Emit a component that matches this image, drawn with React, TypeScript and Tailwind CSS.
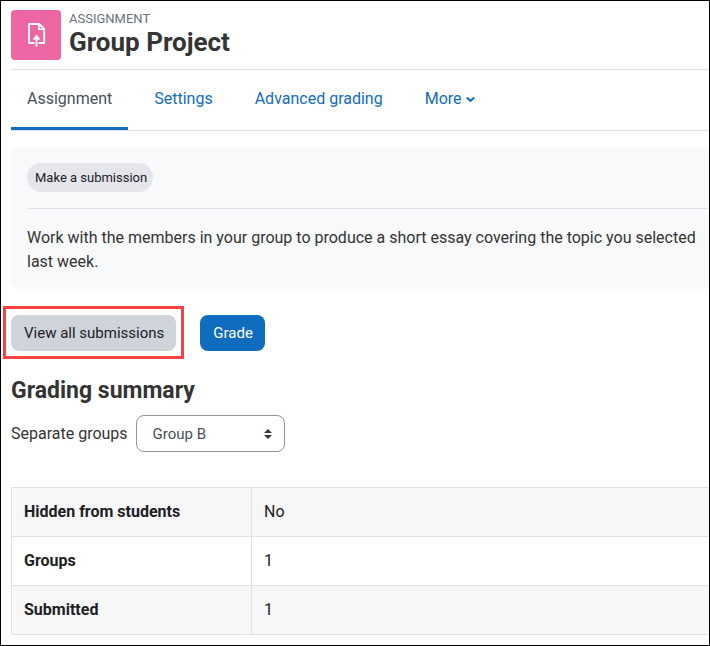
import { useState } from 'react'
import clsx from 'clsx'

const TABS = ['Assignment', 'Settings', 'Advanced grading']

const SUMMARY = [
  { label: 'Hidden from students', value: 'No' },
  { label: 'Groups', value: '1' },
  { label: 'Submitted', value: '1' },
]

function AssignmentIcon() {
  return (
    <svg width="24" height="24" viewBox="0 0 24 24" fill="none" aria-hidden="true">
      <path
        d="M10.5 20H5V1H15.2L20.2 6V20H14.5"
        stroke="#fff"
        strokeWidth="1.8"
        strokeLinejoin="round"
      />
      <path d="M14.8 1V6.3H20" stroke="#fff" strokeWidth="1.6" />
      <path d="M12.5 14V23.8" stroke="#fff" strokeWidth="1.8" />
      <path d="M12.5 11.8L16 16.2H9Z" fill="#fff" stroke="#fff" strokeWidth="0.6" />
    </svg>
  )
}

function PageHeader() {
  return (
    <header className="flex items-center gap-2 border-b border-[#dee2e6] pt-[9px] pb-[9px]">
      <div className="flex size-[50px] shrink-0 items-center justify-center rounded bg-[#eb66a2]">
        <AssignmentIcon />
      </div>
      <div className="pb-0.5">
        <div className="text-[13px] leading-4 text-[#6a737b] uppercase">Assignment</div>
        <h1 className="text-[26px] leading-[30px] font-bold text-[#343434]">Group Project</h1>
      </div>
    </header>
  )
}

function Tabs() {
  return (
    <nav className="flex gap-[10px] border-b border-[#dee2e6]">
      {TABS.map((tab, i) => (
        <a
          key={tab}
          href="#"
          aria-current={i === 0 ? 'page' : undefined}
          className={clsx(
            'flex h-[60px] items-center border-b-3 px-4 leading-6',
            i === 0 ? 'border-[#0f6cbf] text-[#495057]' : 'border-transparent text-[#0f6cbf]'
          )}
        >
          {tab}
        </a>
      ))}
      <button
        type="button"
        className="flex h-[60px] items-center gap-1 border-b-3 border-transparent px-4 leading-6 text-[#0f6cbf]"
      >
        More
        <svg width="9" height="8" viewBox="0 0 9 8" fill="none" aria-hidden="true">
          <path d="M0.8 2.4L4.5 5.8L8.2 2.4" stroke="currentColor" strokeWidth="2" />
        </svg>
      </button>
    </nav>
  )
}

function GroupSelect() {
  const [group, setGroup] = useState('Group B')

  return (
    <div className="mt-2 flex items-center gap-2">
      <label htmlFor="group" className="leading-6">
        Separate groups
      </label>
      <div className="grid items-center">
        <select
          id="group"
          value={group}
          onChange={e => setGroup(e.target.value)}
          className="col-start-1 row-start-1 h-[37px] w-[149px] appearance-none rounded-lg border border-[#8f959e] bg-white px-4 pt-0.5 text-[15px] text-[#495057]"
        >
          <option>All participants</option>
          <option>Group A</option>
          <option>Group B</option>
        </select>
        <svg
          width="8"
          height="10"
          viewBox="0 0 8 10"
          fill="#343a40"
          aria-hidden="true"
          className="pointer-events-none col-start-1 row-start-1 mr-[13px] justify-self-end"
        >
          <path d="M4 0L8 4H0ZM4 10L0 6H8Z" />
        </svg>
      </div>
    </div>
  )
}

export default function App() {
  return (
    <main className="min-h-screen overflow-hidden border border-black bg-white pb-[10px] pl-[10px] font-[Roboto,sans-serif] text-base text-[#343434]">
      <PageHeader />
      <Tabs />

      <section className="mt-4 rounded-l-lg bg-[#f8f9fa] pt-4 pb-[15px] pl-4">
        <span className="inline-block rounded-full bg-[#e4e6eb] py-1 pr-1.5 pl-2 text-[13px] leading-[21px] text-[#1d2125]">
          Make a submission
        </span>
        <hr className="mt-4 mb-[17px] border-[#dee2e6]" />
        <p className="pr-2 leading-6">
          Work with the members in your group to produce a short essay covering the topic you
          selected last week.
        </p>
      </section>

      <div className="mt-[17px] -ml-2 flex items-baseline gap-4">
        <div className="border-3 border-[#fc4144] px-[5px] pt-1.5 pb-[5px]">
          <button
            type="button"
            className="h-9 rounded-lg bg-[#ced4da] pr-3 pl-[13px] text-[15px] text-[#1d2125]"
          >
            View all submissions
          </button>
        </div>
        <button
          type="button"
          className="h-9 rounded-lg bg-[#0f6cbf] pr-3 pl-[13px] text-[15px] text-white"
        >
          Grade
        </button>
      </div>

      <h2 className="mt-4 text-[23px] leading-8 font-bold">Grading summary</h2>
      <GroupSelect />

      <table className="mt-[35px] w-full border-separate border-spacing-0 border-t border-l border-[#dee2e6] text-[#1d2125]">
        <tbody>
          {SUMMARY.map(row => (
            <tr key={row.label} className="odd:bg-[#f7f7f7]">
              <th
                scope="row"
                className="w-[240px] border-r border-b border-[#dee2e6] p-3 text-left leading-6 font-bold"
              >
                {row.label}
              </th>
              <td className="border-b border-[#dee2e6] p-3 leading-6">{row.value}</td>
            </tr>
          ))}
        </tbody>
      </table>
    </main>
  )
}
